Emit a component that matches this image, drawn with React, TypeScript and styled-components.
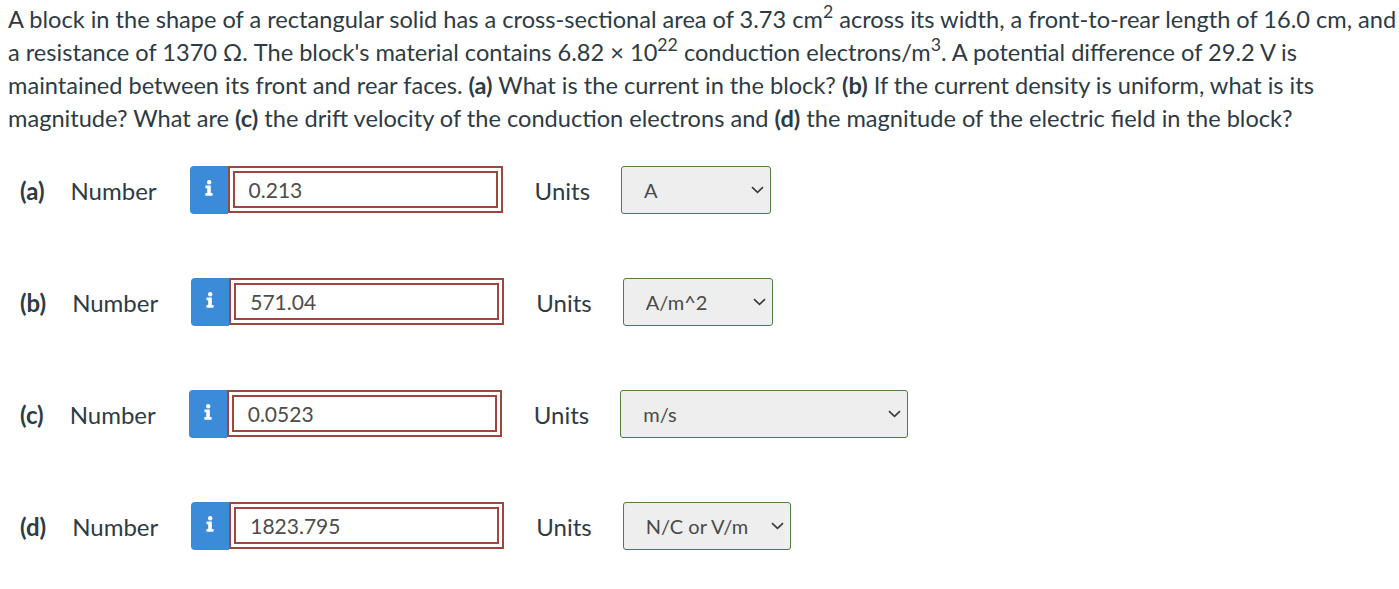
import React from 'react';
import styled, { createGlobalStyle } from 'styled-components';

const GlobalStyle = createGlobalStyle`
  body {
    margin: 0;
    background: #ffffff;
    font-family: Lato, "Open Sans", sans-serif;
    color: #2d3b45;
  }
`;

const Page = styled.div`
  padding: 3px 0 0 8px;
`;

const Question = styled.p`
  margin: 0;
  font-size: 23.6px;
  line-height: 33px;
  color: #2d3b45;

  sup {
    font-size: 0.75em;
    line-height: 0;
    vertical-align: 0.55em;
  }
`;

const Parts = styled.div`
  display: flex;
  flex-direction: column;
  gap: 64px;
  margin-top: 31px;
  padding-left: 12px;
`;

const PartRow = styled.div`
  display: flex;
  align-items: center;
  height: 48px;
`;

const PartLabel = styled.span`
  font-weight: 700;
  font-size: 24px;
  margin-right: 26px;
`;

const FieldLabel = styled.span<{ gap: number }>`
  font-size: 24px;
  margin-right: ${p => p.gap}px;
`;

const InputGroup = styled.div`
  display: flex;
  height: 48px;
  margin-right: 32px;
`;

const InfoButton = styled.div`
  width: 38px;
  height: 48px;
  background: #3c8bd9;
  border-radius: 4px 0 0 4px;
  display: flex;
  align-items: center;
  justify-content: center;
  padding-bottom: 4px;
  box-sizing: border-box;
`;

const AnswerInput = styled.input`
  width: 275px;
  height: 47px;
  box-sizing: border-box;
  border: 7px double #9e473d;
  padding: 0 0 0 14px;
  font-family: Lato, sans-serif;
  font-size: 21px;
  color: #4d4d4d;
  background: #ffffff;
  outline: none;
`;

const SelectWrap = styled.div`
  position: relative;
  display: inline-flex;
`;

const UnitSelect = styled.select<{ w: number }>`
  appearance: none;
  -webkit-appearance: none;
  width: ${p => p.w}px;
  height: 48px;
  box-sizing: border-box;
  border: 1px solid #4f7f3d;
  border-radius: 3px;
  background: #eeeeee;
  padding: 0 0 0 22px;
  font-family: Lato, sans-serif;
  font-size: 20px;
  color: #4a4a4a;
  outline: none;
`;

const Chevron = styled.svg`
  position: absolute;
  right: 7px;
  top: 20px;
  pointer-events: none;
`;

const InfoIcon = () => (
  <svg width="8" height="16" viewBox="0 0 8 16">
    <circle cx="4.2" cy="2.2" r="2.2" fill="#ffffff" />
    <path d="M0.5 5.6 H5.8 V13 H7.6 V15.8 H0.4 V13 H2.2 V8.3 H0.5 Z" fill="#ffffff" />
  </svg>
);

const parts = [
  { key: 'a', value: '0.213', unit: 'A', selectWidth: 150 },
  { key: 'b', value: '571.04', unit: 'A/m^2', selectWidth: 150 },
  { key: 'c', value: '0.0523', unit: 'm/s', selectWidth: 288 },
  { key: 'd', value: '1823.795', unit: 'N/C or V/m', selectWidth: 168 },
];

export default function App() {
  return (
    <Page>
      <GlobalStyle />
      <Question>
        A block in the shape of a rectangular solid has a cross-sectional area of 3.73 cm<sup>2</sup> across its
        width, a front-to-rear length of 16.0 cm, and a resistance of 1370 Ω. The block's material contains
        6.82 × 10<sup>22</sup> conduction electrons/m<sup>3</sup>. A potential difference of 29.2 V is maintained
        between its front and rear faces. <b>(a)</b> What is the current in the block? <b>(b)</b> If the current
        density is uniform, what is its magnitude? What are <b>(c)</b> the drift velocity of the conduction
        electrons and <b>(d)</b> the magnitude of the electric field in the block?
      </Question>
      <Parts>
        {parts.map(part => (
          <PartRow key={part.key}>
            <PartLabel>({part.key})</PartLabel>
            <FieldLabel gap={33}>Number</FieldLabel>
            <InputGroup>
              <InfoButton>
                <InfoIcon />
              </InfoButton>
              <AnswerInput readOnly value={part.value} />
            </InputGroup>
            <FieldLabel gap={31}>Units</FieldLabel>
            <SelectWrap>
              <UnitSelect w={part.selectWidth} value={part.unit} onChange={() => {}}>
                <option value={part.unit}>{part.unit}</option>
              </UnitSelect>
              <Chevron width="13" height="8" viewBox="0 0 13 8">
                <path d="M1 1.2 L6.5 6.4 L12 1.2" fill="none" stroke="#3a3a3a" strokeWidth="1.6" />
              </Chevron>
            </SelectWrap>
          </PartRow>
        ))}
      </Parts>
    </Page>
  );
}
